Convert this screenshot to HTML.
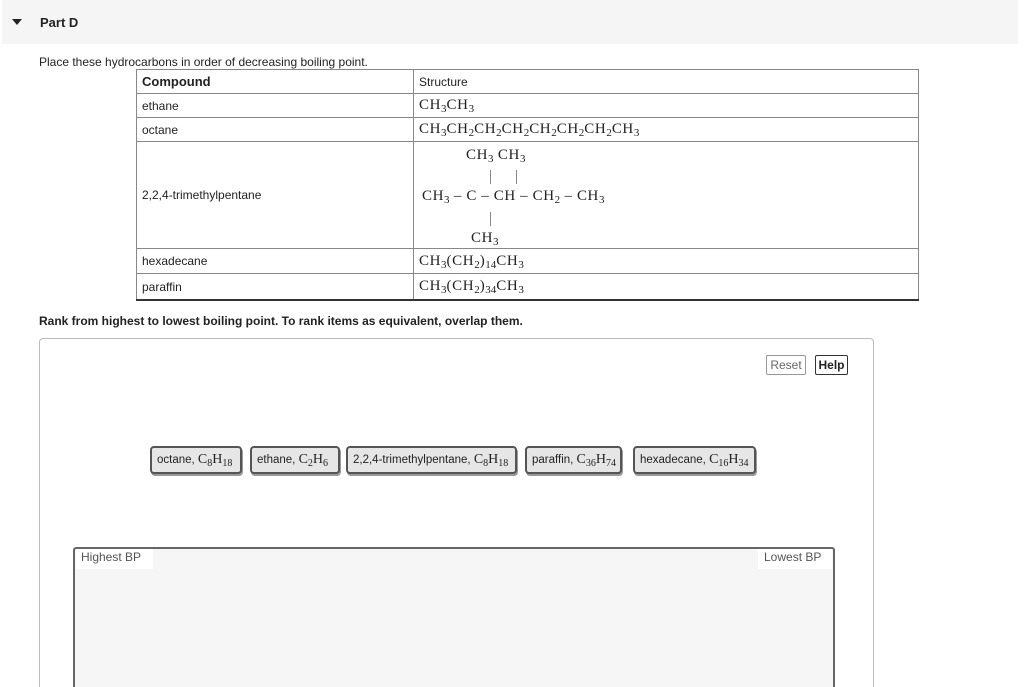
<!DOCTYPE html>
<html style="overflow:hidden;height:687px"><head><style>
body{margin:0;width:1024px;height:687px;overflow:hidden;background:#fff;font-family:"Liberation Sans",sans-serif;font-size:12px;color:#222;position:relative}
.a{position:absolute}
.serif{font-family:"Liberation Serif",serif;font-size:15px;letter-spacing:0.6px}
sub{font-size:11px;vertical-align:-3px;line-height:0;letter-spacing:0}
table{border-collapse:collapse;position:absolute;left:136px;top:69px;width:783px}
td{border:1px solid #888;padding:0 5px;font-size:12px;height:23px}
.chip{position:absolute;top:446px;height:28px;border:2px solid #555;border-radius:4px;background:#e6e6e6;box-shadow:1px 2px 0 #999;box-sizing:border-box;line-height:24px;padding-left:5px;font-size:11.5px;white-space:nowrap;overflow:hidden}
.chip .serif{font-size:14px;letter-spacing:0}
.chip sub{font-size:10px}
.btn{position:absolute;top:355px;height:20px;border:1px solid #999;border-radius:2px;box-sizing:border-box;line-height:18px;text-align:center;font-size:12px}
</style></head><body>
<div class="a" style="left:2px;top:0;width:1016px;height:44px;background:#f5f5f5"></div>
<div class="a" style="left:12px;top:19px;width:0;height:0;border-left:5px solid transparent;border-right:5px solid transparent;border-top:6px solid #222"></div>
<div class="a" style="left:40px;top:15px;font-weight:bold;font-size:13px">Part D</div>
<div class="a" style="left:39px;top:55px">Place these hydrocarbons in order of decreasing boiling point.</div>
<table>
<tr><td style="width:266px;font-weight:bold;font-size:13px;height:23px">Compound</td><td>Structure</td></tr>
<tr><td>ethane</td><td class="serif">CH<sub>3</sub>CH<sub>3</sub></td></tr>
<tr><td>octane</td><td class="serif">CH<sub>3</sub>CH<sub>2</sub>CH<sub>2</sub>CH<sub>2</sub>CH<sub>2</sub>CH<sub>2</sub>CH<sub>2</sub>CH<sub>3</sub></td></tr>
<tr><td style="height:106px">2,2,4-trimethylpentane</td><td class="serif" style="position:relative">
<div class="a" style="left:52px;top:5px">CH<sub>3</sub> CH<sub>3</sub></div>
<div class="a" style="left:76px;top:28px;width:1px;height:14px;background:#888"></div>
<div class="a" style="left:102px;top:28px;width:1px;height:14px;background:#888"></div>
<div class="a" style="left:8px;top:46px">CH<sub>3</sub> – C – CH – CH<sub>2</sub> – CH<sub>3</sub></div>
<div class="a" style="left:76px;top:70px;width:1px;height:14px;background:#888"></div>
<div class="a" style="left:57px;top:88px">CH<sub>3</sub></div>
</td></tr>
<tr><td style="height:24px">hexadecane</td><td class="serif">CH<sub>3</sub>(CH<sub>2</sub>)<sub>14</sub>CH<sub>3</sub></td></tr>
<tr><td style="height:25px;border-bottom:2px solid #333">paraffin</td><td class="serif" style="border-bottom:2px solid #333">CH<sub>3</sub>(CH<sub>2</sub>)<sub>34</sub>CH<sub>3</sub></td></tr>
</table>
<div class="a" style="left:39px;top:314px;font-weight:bold">Rank from highest to lowest boiling point. To rank items as equivalent, overlap them.</div>
<div class="a" style="left:39px;top:338px;width:835px;height:360px;border:1px solid #bbb;border-radius:4px;box-sizing:border-box"></div>
<div class="btn" style="left:766px;width:40px;color:#666">Reset</div>
<div class="btn" style="left:815px;width:33px;font-weight:bold;border-color:#333">Help</div>
<div class="chip" style="left:150px;width:92px">octane, <span class="serif">C<sub>8</sub>H<sub>18</sub></span></div>
<div class="chip" style="left:250px;width:90px">ethane, <span class="serif">C<sub>2</sub>H<sub>6</sub></span></div>
<div class="chip" style="left:346px;width:171px">2,2,4-trimethylpentane, <span class="serif">C<sub>8</sub>H<sub>18</sub></span></div>
<div class="chip" style="left:525px;width:97px">paraffin, <span class="serif">C<sub>36</sub>H<sub>74</sub></span></div>
<div class="chip" style="left:633px;width:123px">hexadecane, <span class="serif">C<sub>16</sub>H<sub>34</sub></span></div>
<div class="a" style="left:73px;top:547px;width:762px;height:160px;border:2px solid #666;border-radius:3px;background:#f6f6f6;box-sizing:border-box"></div>
<div class="a" style="left:76px;top:549px;width:77px;height:20px;background:#fff;color:#555;line-height:17px;padding-left:5px;box-sizing:border-box;font-size:12px">Highest BP</div>
<div class="a" style="left:758px;top:549px;width:74px;height:20px;background:#fff;color:#555;line-height:17px;padding-left:6px;box-sizing:border-box;font-size:12px">Lowest BP</div>
</body></html>
